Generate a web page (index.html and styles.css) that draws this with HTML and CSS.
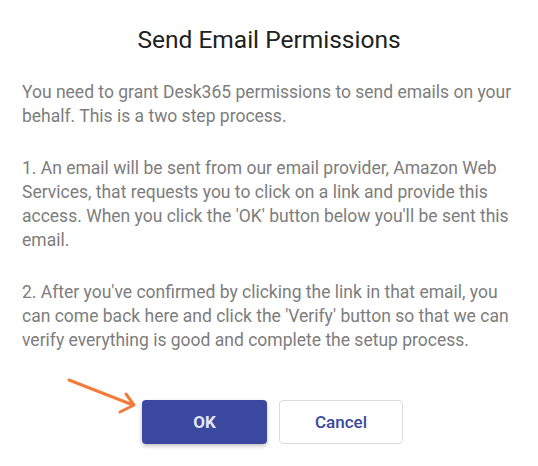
FILE: index.html
```html
<!DOCTYPE html>
<html lang="en">
<head>
  <meta charset="UTF-8" />
  <meta name="viewport" content="width=device-width, initial-scale=1.0"/>
  <title>Send Email Permissions</title>
  <link rel="stylesheet" href="styles.css">
</head>
<body>

  <!-- Permissions dialog -->
  <div class="dialog">
    <h2 class="dialog-title">Send Email Permissions</h2>

    <p>You need to grant Desk365 permissions to send emails on your behalf. This is a two step process.</p>
    <p>1. An email will be sent from our email provider, Amazon Web Services, that requests you to click on a link and provide this access. When you click the 'OK' button below you'll be sent this email.</p>
    <p>2. After you've confirmed by clicking the link in that email, you can come back here and click the 'Verify' button so that we can verify everything is good and complete the setup process.</p>

    <div class="actions">
      <svg class="pointer" width="85" height="50" viewBox="0 0 85 50" aria-hidden="true">
        <path d="M9 10 L73 35 M66 24 L74 35 L60 42" fill="none" stroke="#f37b3c" stroke-width="3" stroke-linecap="round" stroke-linejoin="round"/>
      </svg>
      <button class="btn btn-primary">OK</button>
      <button class="btn btn-outline">Cancel</button>
    </div>
  </div>

</body>
</html>
```

FILE: styles.css
```css
* {
  margin: 0;
  box-sizing: border-box;
  font-family: 'Roboto', 'Noto Sans', sans-serif;
}

body {
  background: #ffffff;
}

/* Dialog */
.dialog {
  padding: 25px 22px 22px;
}

.dialog-title {
  font-size: 24.5px;
  font-weight: 400;
  line-height: 30px;
  color: #212121;
  text-align: center;
  margin-bottom: 25px;
}

.dialog p {
  font-size: 17.5px;
  line-height: 24px;
  color: #7d7d7d;
  margin-bottom: 28px;
}

.dialog p:last-of-type {
  margin-bottom: 48px;
}

/* Buttons */
.actions {
  position: relative;
  display: flex;
  justify-content: center;
  gap: 12px;
  padding-left: 7px;
}

.pointer {
  position: absolute;
  left: 38px;
  top: -30px;
}

.btn {
  height: 44px;
  border-radius: 4px;
  font-size: 17px;
  cursor: pointer;
}

.btn-primary {
  width: 125px;
  background-color: #3a48a0;
  color: #e3e6f5;
  border: none;
  font-weight: 700;
  box-shadow: 0 2px 4px rgba(0, 0, 0, 0.25);
}

.btn-outline {
  width: 124px;
  background-color: #ffffff;
  color: #3a48a0;
  border: 1px solid #dcdcdc;
  font-weight: 500;
}
```
